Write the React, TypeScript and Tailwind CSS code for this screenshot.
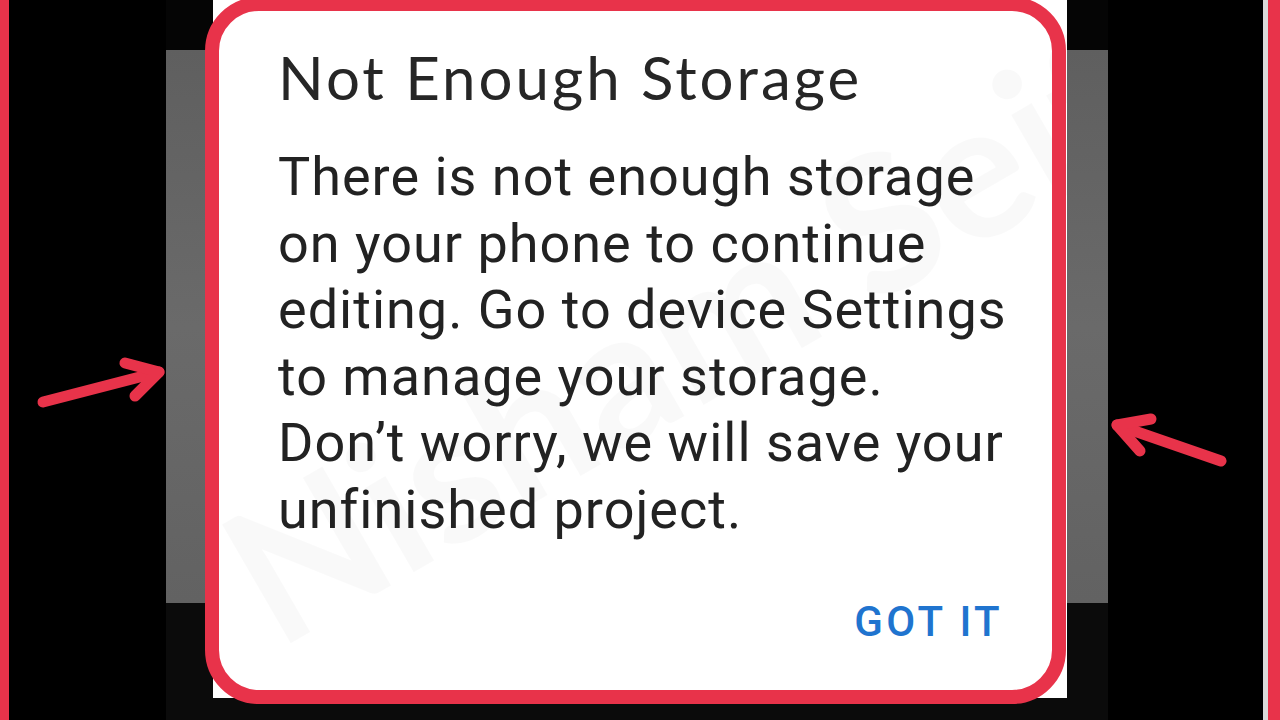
import React from 'react';

const RED = '#e8334a';

const bodyLines = [
  'There is not enough storage',
  'on your phone to continue',
  'editing. Go to device Settings',
  'to manage your storage.',
  'Don\u2019t worry, we will save your',
  'unfinished project.',
];

// Red pointer arrow drawn in page coordinates of its column
const Arrow: React.FC<{ viewBox: string; tail: string; tip: string; barbs: string }> = ({
  viewBox,
  tail,
  tip,
  barbs,
}) => (
  <svg viewBox={viewBox} className="w-full h-full" preserveAspectRatio="none">
    <g stroke={RED} strokeWidth={11} strokeLinecap="round" strokeLinejoin="round" fill="none">
      <path d={`M${tail} L${tip}`} />
      <path d={barbs} />
    </g>
  </svg>
);

// Edge of the phone frame on either side of the dialog
const PhoneEdge: React.FC<{ width: string }> = ({ width }) => (
  <div className={`${width} h-full flex flex-col`}>
    <div className="h-[50px] bg-[#050505]" />
    <div className="h-[553px] bg-gradient-to-b from-[#5f5f5f] via-[#6a6a6a] to-[#626262]" />
    <div className="flex-1 bg-[#0b0b0b]" />
  </div>
);

const StorageDialog: React.FC = () => (
  <div className="relative w-[854px] h-full flex flex-col">
    <div className="relative h-[698px] bg-white overflow-hidden">
      <div
        aria-hidden
        className="absolute left-[-40px] top-[240px] whitespace-nowrap font-bold text-[190px] leading-none text-[rgba(0,0,0,0.025)] -rotate-[30deg] origin-center select-none"
        style={{ fontFamily: 'Lato, sans-serif' }}
      >
        Nisham Seif
      </div>

      <div className="relative pl-[65px] pr-[64px]">
        <h1
          className="mt-[47px] text-[60px] leading-[60px] tracking-[3px] text-[#262626] font-normal"
          style={{ fontFamily: 'Lato, "Open Sans", sans-serif' }}
        >
          Not Enough Storage
        </h1>
        <div
          className="mt-[37px] text-[54px] leading-[66.5px] tracking-[1px] text-[#222222]"
          style={{ fontFamily: 'Roboto, "Noto Sans", sans-serif' }}
        >
          {bodyLines.map(line => (
            <div key={line} className="whitespace-nowrap">
              {line}
            </div>
          ))}
        </div>
        <div className="mt-[58px] flex justify-end">
          <button
            className="text-[42px] leading-[42px] font-medium tracking-[0.08em] text-[#1f74cf]"
            style={{ fontFamily: 'Roboto, sans-serif' }}
          >
            GOT IT
          </button>
        </div>
      </div>
    </div>
    <div className="flex-1 bg-[#0b0b0b]" />
    <div
      className="absolute left-[-8px] right-[1px] top-[-3px] bottom-[16px] rounded-[54px] border-[14px] pointer-events-none"
      style={{ borderColor: RED }}
    />
  </div>
);

export default function App() {
  return (
    <div className="w-[1280px] h-[720px] bg-black flex overflow-hidden">
      <div className="w-[9px] h-full bg-[#e8334a]" />
      <div className="w-[157px] h-full">
        <Arrow viewBox="9 0 157 720" tail="43,402" tip="159,372" barbs="M125,363 L159,372 L135,396" />
      </div>
      <PhoneEdge width="w-[47px]" />
      <StorageDialog />
      <PhoneEdge width="w-[41px]" />
      <div className="w-[155px] h-full">
        <Arrow viewBox="1108 0 155 720" tail="1221,461" tip="1117,425" barbs="M1151,419 L1117,425 L1140,451" />
      </div>
      <div className="w-[5px] h-full bg-[#d9d9d9]" />
      <div className="flex-1 h-full bg-[#e8334a]" />
    </div>
  );
}
